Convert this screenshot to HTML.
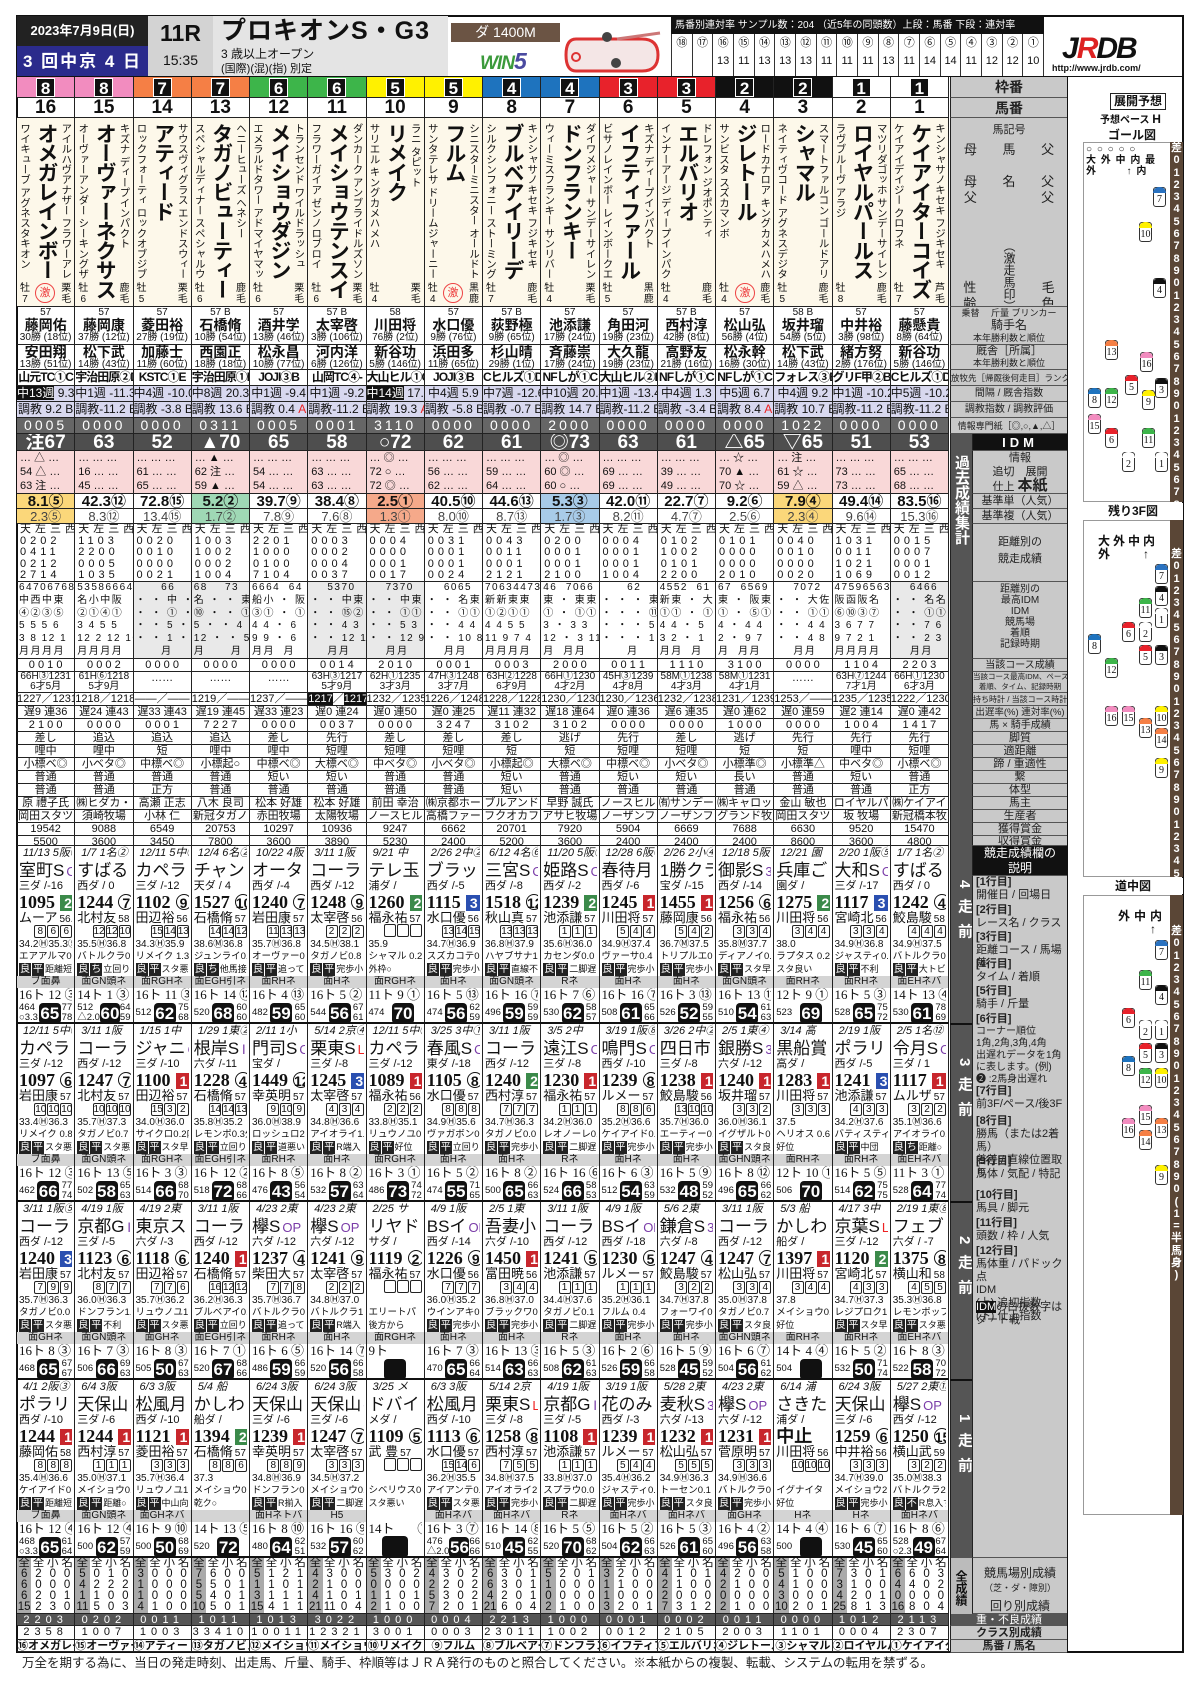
<!DOCTYPE html>
<html><head><meta charset="utf-8">
<style>
*{margin:0;padding:0;box-sizing:border-box}
body{width:1200px;height:1683px;background:#fff;position:relative;overflow:hidden;font-family:"Liberation Sans","Noto Sans CJK JP",sans-serif;color:#111}
.ab{position:absolute}
.row{position:absolute;left:17px;width:932px;display:flex;border-bottom:1px solid #222}
.row>div{flex:0 0 58.25px;width:58.25px;border-right:1px solid #222;overflow:hidden;text-align:center;white-space:nowrap}
.lab{position:absolute;left:950px;width:117px;background:#c9c9c9;border-bottom:1px solid #555;border-left:1px solid #222;text-align:center;font-size:10px;color:#222;overflow:hidden;white-space:nowrap}
.lab2{left:972px;width:95px}
.frm>div{display:flex;align-items:center;justify-content:center}
.frm span{display:inline-block;width:19px;height:19px;background:#111;color:#fff;font-weight:bold;font-size:17px;line-height:19px;border:1px solid #fff}
.num>div{font-size:19px;font-weight:bold;line-height:20px}
.nm>div{background:#fdf8ea;position:relative}
.nm .r,.nm .l,.nm .c{position:absolute;top:5px;writing-mode:vertical-rl;white-space:nowrap}
.nm .r{right:2px;font-size:10.5px;line-height:12px;letter-spacing:-0.3px}
.nm .l{left:2px;font-size:10.5px;line-height:12px;letter-spacing:-0.3px}
.nm .c{left:16px;font-size:21px;line-height:26px;font-weight:bold;letter-spacing:-1.5px}
.nm .sx{position:absolute;bottom:1px;left:3px;font-size:10px;line-height:11px;width:10px;white-space:normal}
.nm .cl{position:absolute;bottom:1px;right:3px;font-size:10px;line-height:11px;width:10px;white-space:normal}
.jk>div{font-size:10px;line-height:12px}
.jk b{display:block;font-size:14px;line-height:13px}
.tr>div{font-size:10px;line-height:11px}
.tr b{display:block;font-size:14px;line-height:14px}
.sm>div{font-size:12px;line-height:15px;font-weight:bold;letter-spacing:-1px}
.lv>div{background:#d8d8ef;font-size:12px;line-height:15px}
.inf>div{background:#666;color:#fff;font-size:14px;line-height:15px;letter-spacing:3px}
.idm>div{background:#4e4e4e;color:#fff;font-size:19px;font-weight:bold;line-height:17px}
.pk>div{background:#f9d8d8;font-size:11px;line-height:14px;text-align:left;padding-left:3px}
.t1>div{font-size:15px;font-weight:bold;line-height:15px}
.t2>div{font-size:13px;line-height:15px;color:#444}
.ds>div{font-size:11px;line-height:11.5px;letter-spacing:4px;padding-left:3px;text-align:left;white-space:pre}
.mx>div{font-size:10px;line-height:12.8px;letter-spacing:1.5px;padding-left:2px;text-align:left;white-space:pre}
.tx>div{font-size:11px;line-height:12px}
.pb{height:178px;font-size:11px;line-height:12px;text-align:left;padding:0 2px}
.pb p{white-space:nowrap;overflow:hidden}
.pb .a{height:15px;font-size:11px;line-height:15px;font-style:italic;padding-left:4px}
.pb .b{height:19px;font-size:17px;line-height:19px}
.pb .b em{font-style:normal;font-size:13px;color:#7a3ca8;margin-left:2px}
.pb .b em.r{color:#e22}
.pb .c{height:13px;font-size:11px;line-height:13px}
.pb .d{height:18px;font-size:18px;line-height:18px;font-family:"Liberation Serif",serif;font-weight:bold}
.pb .d u{text-decoration:none;display:inline-block;width:16px;height:16px;font-size:14px;line-height:16px;color:#fff;text-align:center;margin-left:5px;font-family:"Liberation Sans",sans-serif}
.g1{background:#c8262c}.g2{background:#3b8a4a}.g3{background:#2a4fb0}.g0{background:#fff;color:#111!important;border:1px solid #111;border-radius:50%}
.pb .e{height:13px;font-size:13px;line-height:13px}
.pb .e small{font-size:10px;margin-left:2px}
.pb .f{height:15px;line-height:15px;text-align:right;font-size:10px}
.pb .f span{display:inline-block;width:12px;height:13px;border:1px solid #222;border-radius:2px;line-height:11px;text-align:center;margin-left:1px}
.pb .h{height:12px;font-size:10px}
.pb .i{height:12px;font-size:9.5px}
.pb .j{height:13px;font-size:9px;line-height:13px}
.pb .j s{text-decoration:none;display:inline-block;background:#222;color:#fff;width:12px;text-align:center;margin-right:1px;font-size:10px}
.pb .k{height:12px;background:#d4d4d4;text-align:center;font-size:10px;margin:0 -2px}
.pb .m{height:14px;font-size:13px;line-height:14px;font-family:"Liberation Serif",serif}
.pb .n{height:22px;display:flex;justify-content:space-between;align-items:center;font-size:9.5px;line-height:10px}
.pb .n b{display:inline-block;background:#111;color:#fff;width:22px;height:21px;border-radius:4px;font-size:17px;line-height:21px;text-align:center}
.bs>div{font-size:11.5px;line-height:11px;display:flex;text-align:center;letter-spacing:0}
.bs>div>span{flex:1;white-space:pre}
.bs>div>span:first-child{background:#aaa}
.hi{position:absolute;width:13px;height:20px;border:1px solid #333;border-radius:3px;background:#fff;font-size:10px;text-align:center;line-height:24px;font-family:"Liberation Serif",serif}
.hi:before{content:"";position:absolute;left:-1px;right:-1px;top:-1px;height:6px;border-radius:6px 6px 0 0;background:var(--c)}
.strip{position:absolute;left:1170px;width:13px;background:#5a4636;color:#fff;font-size:11px;line-height:12.3px;text-align:center;white-space:pre;font-weight:bold}
</style></head><body>

<div class="ab" style="left:16px;top:15px;width:1168px;height:1638px;border:2px solid #111"></div>

<div class="ab" style="left:17px;top:16px;width:131px;height:30px;background:#222;color:#fff;font-size:13px;font-weight:bold;line-height:30px;text-align:center">2023年7月9日(日)</div>
<div class="ab" style="left:17px;top:46px;width:131px;height:31px;background:#2b2b8c;color:#fff;font-size:17px;font-weight:bold;line-height:31px;text-align:center;letter-spacing:2px">3 回中京 4 日</div>
<div class="ab" style="left:148px;top:16px;width:65px;height:61px;background:#d3d3d3;text-align:center"><div style="font-size:23px;font-weight:bold;line-height:34px">11R</div><div style="font-size:14px;line-height:20px">15:35</div></div>
<div class="ab" style="left:213px;top:16px;width:235px;height:61px;background:#e4e4e4;padding-left:8px"><div style="font-size:25px;font-weight:bold;line-height:30px;letter-spacing:1px">プロキオンS・G3</div><div style="font-size:12px;line-height:16px">3 歳以上オープン</div><div style="font-size:11px;line-height:14px">(国際)(混)(指) 別定</div></div>
<div class="ab" style="left:451px;top:23px;width:109px;height:19px;background:#6b5444;color:#fff;font-size:14px;line-height:19px;text-align:center">ダ 1400M</div>
<div class="ab" style="left:480px;top:48px;font-size:19px;font-weight:bold;font-style:italic;color:#3b9a3b;letter-spacing:-1px">WIN<span style="color:#4a4aa0;font-size:23px">5</span></div>
<svg class="ab" style="left:562px;top:25px" width="108" height="52"><path d="M14 14 H80 Q96 14 96 30 Q96 46 80 46 H14 Q4 46 4 30 Q4 14 14 14Z" fill="#f4e6e6" stroke="#d33" stroke-width="3"/><circle cx="14" cy="32" r="4" fill="none" stroke="#d33" stroke-width="2"/><path d="M55 14 L98 8" stroke="#c77" stroke-width="3"/><circle cx="45" cy="12" r="5" fill="#444"/><circle cx="54" cy="38" r="5" fill="#444"/></svg>
<div class="ab" style="left:671px;top:17px;width:373px;height:17px;background:#111;color:#fff;font-size:10px;line-height:17px;padding-left:4px;white-space:nowrap">馬番別連対率 サンプル数：204 （近5年の同頭数）上段：馬番 下段：連対率</div>
<div class="ab" style="left:671px;top:34px;width:373px;height:43px;display:flex;font-size:11px">
<div style="flex:1;border-left:1px solid #333;text-align:center;line-height:18px">⑱</div><div style="flex:1;border-left:1px solid #333;text-align:center;line-height:18px">⑰</div><div style="flex:1;border-left:1px solid #333;text-align:center;line-height:18px">⑯<br>13</div><div style="flex:1;border-left:1px solid #333;text-align:center;line-height:18px">⑮<br>11</div><div style="flex:1;border-left:1px solid #333;text-align:center;line-height:18px">⑭<br>13</div><div style="flex:1;border-left:1px solid #333;text-align:center;line-height:18px">⑬<br>13</div><div style="flex:1;border-left:1px solid #333;text-align:center;line-height:18px">⑫<br>13</div><div style="flex:1;border-left:1px solid #333;text-align:center;line-height:18px">⑪<br>11</div><div style="flex:1;border-left:1px solid #333;text-align:center;line-height:18px">⑩<br>11</div><div style="flex:1;border-left:1px solid #333;text-align:center;line-height:18px">⑨<br>11</div><div style="flex:1;border-left:1px solid #333;text-align:center;line-height:18px">⑧<br>13</div><div style="flex:1;border-left:1px solid #333;text-align:center;line-height:18px">⑦<br>11</div><div style="flex:1;border-left:1px solid #333;text-align:center;line-height:18px">⑥<br>14</div><div style="flex:1;border-left:1px solid #333;text-align:center;line-height:18px">⑤<br>14</div><div style="flex:1;border-left:1px solid #333;text-align:center;line-height:18px">④<br>11</div><div style="flex:1;border-left:1px solid #333;text-align:center;line-height:18px">③<br>12</div><div style="flex:1;border-left:1px solid #333;text-align:center;line-height:18px">②<br>12</div><div style="flex:1;border-left:1px solid #333;border-right:1px solid #333;text-align:center;line-height:18px">①<br>10</div></div>
<div class="ab" style="left:1062px;top:32px;font-size:30px;font-weight:900;font-style:italic;letter-spacing:-2px;color:#111">J<span style="color:#d22">R</span>DB</div>
<div class="ab" style="left:1052px;top:63px;font-size:9px;font-weight:bold">http://www.jrdb.com/</div>
<div class="ab" style="left:17px;top:76px;width:1167px;height:1px;background:#111"></div>

<div class="row frm" style="top:77px;height:21px">
<div style="background:#f28cbf"><span>8</span></div><div style="background:#f28cbf"><span>8</span></div><div style="background:#f57f45"><span>7</span></div><div style="background:#f57f45"><span>7</span></div><div style="background:#3db54a"><span>6</span></div><div style="background:#3db54a"><span>6</span></div><div style="background:#fff100"><span>5</span></div><div style="background:#fff100"><span>5</span></div><div style="background:#1e73be"><span>4</span></div><div style="background:#1e73be"><span>4</span></div><div style="background:#e8222b"><span>3</span></div><div style="background:#e8222b"><span>3</span></div><div style="background:#111"><span>2</span></div><div style="background:#111"><span>2</span></div><div style="background:#fff"><span>1</span></div><div style="background:#fff"><span>1</span></div></div>
<div class="row num" style="top:98px;height:20px"><div>16</div><div>15</div><div>14</div><div>13</div><div>12</div><div>11</div><div>10</div><div>9</div><div>8</div><div>7</div><div>6</div><div>5</div><div>4</div><div>3</div><div>2</div><div>1</div></div>

<div class="row nm" style="top:118px;height:189px">
<div><span class="r">アイルハヴアナザー フラワーアレ</span><span class="c">オメガレインボー</span><span class="l">ワイキューブ アグネスタキオン</span><span class="sx">牡7</span><span class="cl">栗毛</span></div>
<div><span class="r">キズナ ディープインパクト</span><span class="c">オーヴァーネクサス</span><span class="l">オーヴァーアンダー シーキングザ</span><span class="sx">牡6</span><span class="cl">鹿毛</span></div>
<div><span class="r">サウスヴィグラス エンドスウィー</span><span class="c">アティード</span><span class="l">ロックフォーティ ロックオブジブ</span><span class="sx">牡5</span><span class="cl">栗毛</span></div>
<div><span class="r">ヘニーヒューズ ヘネシー</span><span class="c">タガノビューティー</span><span class="l">スペシャルディナー スペシャルウ</span><span class="sx">牡6</span><span class="cl">鹿毛</span></div>
<div><span class="r">トランセンド ワイルドラッシュ</span><span class="c">メイショウダジン</span><span class="l">エメラルドタワー アドマイヤマッ</span><span class="sx">牡6</span><span class="cl">栗毛</span></div>
<div><span class="r">ダンカーク アンブライドルズソン</span><span class="c">メイショウテンスイ</span><span class="l">フラワーガイア ゼンノロブロイ</span><span class="sx">牡6</span><span class="cl">栗毛</span></div>
<div><span class="r">ラニ タピット</span><span class="c">リメイク</span><span class="l">サリエル キングカメハメハ</span><span class="sx">牡4</span><span class="cl">栗毛</span></div>
<div><span class="r">シニスターミニスター オールドト</span><span class="c">フルム</span><span class="l">サンタテレサ ドリームジャーニー</span><span class="sx">牡4</span><span class="cl">黒鹿</span></div>
<div><span class="r">キンシャサノキセキ フジキセキ</span><span class="c">ブルベアイリーデ</span><span class="l">シルクシンフォニー ストーミング</span><span class="sx">牡7</span><span class="cl">鹿毛</span></div>
<div><span class="r">ダイワメジャー サンデーサイレン</span><span class="c">ドンフランキー</span><span class="l">ウィーミスフランキー サンリバー</span><span class="sx">牡4</span><span class="cl">栗毛</span></div>
<div><span class="r">キズナ ディープインパクト</span><span class="c">イフティファール</span><span class="l">ビサノレインボー レインボークエ</span><span class="sx">牡5</span><span class="cl">黒鹿</span></div>
<div><span class="r">ドレフォン ジオポンティ</span><span class="c">エルバリオ</span><span class="l">インナーアージ ディープインパク</span><span class="sx">牡4</span><span class="cl">鹿毛</span></div>
<div><span class="r">ロードカナロア キングカメハメハ</span><span class="c">ジレトール</span><span class="l">サンビスタ スズカマンボ</span><span class="sx">牡4</span><span class="cl">鹿毛</span></div>
<div><span class="r">スマートファルコン ゴールドアリ</span><span class="c">シャマル</span><span class="l">ネイティヴコード アグネスデジタ</span><span class="sx">牡5</span><span class="cl">鹿毛</span></div>
<div><span class="r">マツリダゴッホ サンデーサイレン</span><span class="c">ロイヤルパールス</span><span class="l">ラヴブルーヴ アラジ</span><span class="sx">牡8</span><span class="cl">鹿毛</span></div>
<div><span class="r">キンシャサノキセキ フジキセキ</span><span class="c">ケイアイターコイズ</span><span class="l">ケイアイデイジー クロフネ</span><span class="sx">牡7</span><span class="cl">芦毛</span></div>
</div>
<div class="ab" style="left:35px;top:283px;width:20px;height:20px;border:1px solid #e44;border-radius:50%;color:#e44;font-size:11px;line-height:18px;text-align:center;background:#fdf8ea">激</div>
<div class="ab" style="left:443px;top:283px;width:20px;height:20px;border:1px solid #e44;border-radius:50%;color:#e44;font-size:11px;line-height:18px;text-align:center;background:#fdf8ea">激</div>
<div class="ab" style="left:735px;top:283px;width:20px;height:20px;border:1px solid #e44;border-radius:50%;color:#e44;font-size:11px;line-height:18px;text-align:center;background:#fdf8ea">激</div>

<div class="row jk" style="top:307px;height:38px">
<div>57<b>藤岡佑</b>30勝 (18位)</div><div>57<b>藤岡康</b>37勝 (12位)</div><div>57<b>菱田裕</b>27勝 (19位)</div><div>57 B<b>石橋脩</b>10勝 (54位)</div><div>57<b>酒井学</b>13勝 (46位)</div><div>57 B<b>太宰啓</b>3勝 (106位)</div><div>58<b>川田将</b>76勝 (2位)</div><div>57<b>水口優</b>9勝 (76位)</div><div>57 B<b>荻野極</b>9勝 (65位)</div><div>57<b>池添謙</b>17勝 (24位)</div><div>57<b>角田河</b>19勝 (23位)</div><div>57 B<b>西村淳</b>42勝 (8位)</div><div>57<b>松山弘</b>56勝 (4位)</div><div>58 B<b>坂井瑠</b>54勝 (5位)</div><div>57<b>中井裕</b>3勝 (98位)</div><div>57<b>藤懸貴</b>8勝 (64位)</div></div>
<div class="row tr" style="top:345px;height:25px">
<div><b>安田翔</b>13勝 (51位)</div><div><b>松下武</b>14勝 (43位)</div><div><b>加藤士</b>11勝 (60位)</div><div><b>西園正</b>18勝 (18位)</div><div><b>松永昌</b>10勝 (77位)</div><div><b>河内洋</b>6勝 (126位)</div><div><b>新谷功</b>5勝 (146位)</div><div><b>浜田多</b>11勝 (65位)</div><div><b>杉山晴</b>29勝 (1位)</div><div><b>斉藤崇</b>17勝 (24位)</div><div><b>大久龍</b>19勝 (23位)</div><div><b>高野友</b>21勝 (16位)</div><div><b>松永幹</b>16勝 (30位)</div><div><b>松下武</b>14勝 (43位)</div><div><b>緒方努</b>2勝 (176位)</div><div><b>新谷功</b>5勝 (146位)</div></div>
<div class="row sm" style="top:370px;height:16px"><div>山元TC①C</div><div>宇治田原②D</div><div>KSTC①E</div><div>宇治田原①D</div><div>JOJI③B</div><div>山岡TC④-</div><div>大山ヒル①C</div><div>JOJI③B</div><div>Cヒルズ①D</div><div>NFしが①C</div><div>大山ヒル②B</div><div>NFしが①C</div><div>NFしが①C</div><div>フォレス③B</div><div>グリF甲②B</div><div>Cヒルズ①D</div></div>
<div class="row lv" style="top:386px;height:16px"><div><span style="background:#111;color:#fff">中13週</span> 9.3</div><div>中1週 -11.3</div><div>中4週 -10.0</div><div>中8週 20.3</div><div>中1週 -9.4</div><div>中1週 -9.2</div><div><span style="background:#111;color:#fff">中14週</span> 17.2</div><div>中4週 5.9</div><div>中7週 -12.6</div><div>中10週 20.4</div><div>中1週 -13.4</div><div>中4週 1.3</div><div>中5週 6.7</div><div>中4週 9.2</div><div>中1週 -10.2</div><div>中5週 -10.2</div></div>
<div class="row lv" style="top:402px;height:16px"><div>調教 9.2 B</div><div>調教-11.2 B</div><div>調教 -3.8 B</div><div>調教 13.6 B</div><div>調教 0.4 <span style="color:#e22">A</span></div><div>調教-11.2 B</div><div>調教 19.3 <span style="color:#e22">AA</span></div><div>調教 -5.8 B</div><div>調教 -0.7 B</div><div>調教 14.7 B</div><div>調教-11.2 B</div><div>調教 -3.4 B</div><div>調教 8.4 <span style="color:#e22">A</span></div><div>調教 10.7 B</div><div>調教-11.2 B</div><div>調教-11.2 B</div></div>
<div class="row inf" style="top:418px;height:16px"><div>0005</div><div>0000</div><div>0000</div><div>0311</div><div>0005</div><div>0001</div><div>3110</div><div>0000</div><div>0000</div><div>2000</div><div>0000</div><div>0000</div><div>0000</div><div>1022</div><div>0000</div><div>0000</div></div>
<div class="row idm" style="top:434px;height:17px"><div>注67</div><div>63</div><div>52</div><div>▲70</div><div>65</div><div>58</div><div>○72</div><div>62</div><div>61</div><div>◎73</div><div>63</div><div>61</div><div>△65</div><div>▽65</div><div>51</div><div>53</div></div>
<div class="row pk" style="top:451px;height:43px">
<div>… △ …<br>54 △ …<br>63 注 …</div><div>… … …<br>16 … …<br>45 … …</div><div>… … …<br>61 … …<br>65 … …</div><div>… ▲ …<br>62 注 …<br>59 ▲ …</div><div>… … …<br>54 … …<br>54 … …</div><div>… … …<br>63 … …<br>63 … …</div><div>… ◎ …<br>72 ○ …<br>72 ◎ …</div><div>… … …<br>56 … …<br>62 … …</div><div>… … …<br>59 … …<br>64 … …</div><div>… ◎ …<br>60 ◎ …<br>60 ○ …</div><div>… … …<br>69 … …<br>69 … …</div><div>… … …<br>39 … …<br>49 … …</div><div>… ☆ …<br>70 ▲ …<br>70 ☆ …</div><div>… 注 …<br>61 ☆ …<br>59 △ …</div><div>… … …<br>73 … …<br>73 … …</div><div>… … …<br>65 … …<br>68 … …</div></div>
<div class="row t1" style="top:494px;height:15px"><div style="background:#fbd77a">8.1⑤</div><div>42.3⑫</div><div>72.8⑮</div><div style="background:#9fd8b5">5.2②</div><div>39.7⑨</div><div>38.4⑧</div><div style="background:#f5a98a">2.5①</div><div>40.5⑩</div><div>44.6⑬</div><div style="background:#a8cbe8">5.3③</div><div>42.0⑪</div><div>22.7⑦</div><div>9.2⑥</div><div style="background:#fbd77a">7.9④</div><div>49.4⑭</div><div>83.5⑯</div></div>
<div class="row t2" style="top:509px;height:15px"><div style="background:#fbd77a">2.3⑤</div><div>8.3⑫</div><div>13.4⑮</div><div style="background:#9fd8b5">1.7②</div><div>7.8⑨</div><div>7.6⑧</div><div style="background:#f5a98a">1.3①</div><div>8.0⑩</div><div>8.7⑬</div><div style="background:#a8cbe8">1.7③</div><div>8.2⑪</div><div>4.7⑦</div><div>2.5⑥</div><div style="background:#fbd77a">2.3④</div><div>9.6⑭</div><div>15.3⑯</div></div>
<div class="row ds" style="top:524px;height:58px">
<div>天左三西
0202
0411
0212
2714</div><div>天左三西
1103
2200
0005
1035</div><div>天左三西
0020
0010
0000
0021</div><div>天左三西
1003
1002
0002
1004</div><div>天左三西
2201
1000
0100
7104</div><div>天左三西
0003
0002
0004
0037</div><div>天左三西
0004
0000
0001
0017</div><div>天左三西
0031
0001
0001
0024</div><div>天左三西
0043
0011
0001
2121</div><div>天左三西
0200
0001
0001
2100</div><div>天左三西
0004
0001
0001
1004</div><div>天左三西
0102
1002
0101
2200</div><div>天左三西
0101
0000
0000
2010</div><div>天左三西
0040
0010
0000
0020</div><div>天左三西
1031
0011
1021
1069</div><div>天左三西
0015
0007
0001
0012</div></div>
<div class="row mx" style="top:582px;height:77px">
<div>64706768
中西中東
④②③⑤
5 5 5 6
3 8 12 1
月月月月</div><div>53586664
名小中阪
②①④①
3 4 5 5
12 2 12 10
月月月月</div><div style="background:#e9e9e9">      66
・ ・ 中 ・
・ ・ ① ・
・ ・ 5 ・
・ ・ 1 ・
      月</div><div style="background:#e9e9e9">68    73
名 ・ ・ 東
⑩ ・ ・ ①
5 ・ ・ 4
12 ・ ・ 5
月      月</div><div>6664  64
船小 ・ 阪
③① ・ ①
4 4 ・ 6
9 9 ・ 6
月月  月</div><div style="background:#e9e9e9">    5370
・ ・ 中東
・ ・ ⑮②
・ ・ 4 3
・ ・ 12 11
    月月</div><div style="background:#e9e9e9">    7370
・ ・ 中東
・ ・ ①①
・ ・ 5 3
・ ・ 12 9
    月月</div><div>    6065
・ ・ 名東
・ ・ ①①
・ ・ 4 4
・ ・ 10 8
    月月</div><div>70634473
新新東東
①②①①
4 4 5 5
11 9 7 4
月月月月</div><div>46  7066
東 ・ 東東
① ・ ①①
3 ・ 3 3
12 ・ 3 11
月  月月</div><div>      62
・ ・ ・ 東
・ ・ ・ ⑪
・ ・ ・ 5
・ ・ ・ 1
      月</div><div>4552  61
新東 ・ 大
①① ・ ①
4 4 ・ 5
3 2 ・ 1
月月  月</div><div>67  6569
東 ・ 阪東
① ・ ⑤①
4 ・ 4 4
2 ・ 9 7
月  月月</div><div>    7072
・ ・ 大佐
・ ・ ①①
・ ・ 4 4
・ ・ 4 8
    月月</div><div>47596563
阪函阪名
⑥⑩③⑦
3 6 7 7
9 7 2 1
月月月月</div><div style="background:#e9e9e9">    6466
・ ・ 名名
・ ・ ①①
・ ・ 7 6
・ ・ 2 3
    月月</div></div>
<div class="row tx" style="top:659px;height:13px"><div>0 0 1 0</div><div>0 0 0 2</div><div>0 0 0 0</div><div>0 0 0 0</div><div>0 0 0 0</div><div>0 0 1 4</div><div>2 0 1 0</div><div>0 0 0 1</div><div>0 0 0 3</div><div>2 0 0 0</div><div>0 0 1 1</div><div>1 1 1 0</div><div>3 1 0 0</div><div>0 0 0 0</div><div>1 1 0 4</div><div>2 2 0 3</div></div>
<div class="row tx" style="top:672px;height:21px;font-size:10px"><div style="font-size:10px;line-height:10px">66H③1231<br>6才5月</div><div style="font-size:10px;line-height:10px">61H⑥1218<br>5才9月</div><div>……</div><div>……</div><div>……</div><div style="font-size:10px;line-height:10px">63H③1217<br>5才9月</div><div style="font-size:10px;line-height:10px">62H①1235<br>3才3月</div><div style="font-size:10px;line-height:10px">47H③1248<br>3才7月</div><div style="font-size:10px;line-height:10px">63H②1228<br>6才9月</div><div style="font-size:10px;line-height:10px">66H①1230<br>4才2月</div><div style="font-size:10px;line-height:10px">45H③1239<br>4才8月</div><div style="font-size:10px;line-height:10px">58M①1238<br>4才3月</div><div style="font-size:10px;line-height:10px">58M①1231<br>4才1月</div><div>……</div><div style="font-size:10px;line-height:10px">63H⑦1244<br>7才1月</div><div style="font-size:10px;line-height:10px">66H①1230<br>6才3月</div></div>
<div class="row tx" style="top:693px;height:13px;font-size:10px"><div>1227／1231</div><div>1218／1218</div><div>――／――</div><div>1219／――</div><div>1237／――</div><div><span style="background:#111;color:#fff">1217</span>／<span style="background:#111;color:#fff">1217</span></div><div>1232／1235</div><div>1226／1248</div><div>1228／1228</div><div>1230／1230</div><div>1230／1236</div><div>1232／1238</div><div>1231／1239</div><div>1253／――</div><div>1235／1235</div><div>1222／1230</div></div>
<div class="row tx" style="top:706px;height:13px"><div>遅9 連36</div><div>遅24 連43</div><div>遅33 連43</div><div>遅19 連45</div><div>遅33 連23</div><div>遅0 連24</div><div>遅0 連50</div><div>遅0 連25</div><div>遅11 連32</div><div>遅18 連64</div><div>遅0 連36</div><div>遅6 連35</div><div>遅0 連62</div><div>遅0 連59</div><div>遅2 連14</div><div>遅0 連42</div></div>
<div class="row tx" style="top:719px;height:13px"><div>2 1 0 0</div><div>0 0 0 0</div><div>0 0 0 1</div><div>7 2 2 7</div><div>0 0 0 0</div><div>0 0 3 7</div><div>0 0 0 0</div><div>3 2 4 7</div><div>3 1 0 2</div><div>3 1 0 2</div><div>0 0 0 0</div><div>0 0 0 0</div><div>1 0 0 0</div><div>0 0 0 0</div><div>1 0 0 4</div><div>1 4 1 7</div></div>
<div class="row tx" style="top:732px;height:13px"><div>差し</div><div>追込</div><div>追込</div><div>追込</div><div>差し</div><div>先行</div><div>差し</div><div>差し</div><div>差し</div><div>逃げ</div><div>先行</div><div>差し</div><div>逃げ</div><div>先行</div><div>先行</div><div>先行</div></div>
<div class="row tx" style="top:745px;height:13px"><div>哩中</div><div>哩中</div><div>短</div><div>哩中</div><div>哩中</div><div>短哩</div><div>短哩</div><div>短哩</div><div>短</div><div>短</div><div>短哩</div><div>短哩</div><div>短</div><div>短</div><div>哩中</div><div>短哩</div></div>
<div class="row tx" style="top:758px;height:13px"><div>小標ベ◎</div><div>小ベタ◎</div><div>中標ベ◎</div><div>小標起○</div><div>中標ベ◎</div><div>大標ベ◎</div><div>中ベタ◎</div><div>小ベタ◎</div><div>小標起◎</div><div>大標ベ◎</div><div>中標ベ◎</div><div>小ベタ◎</div><div>小標準◎</div><div>小標準△</div><div>中ベタ◎</div><div>小標ベ◎</div></div>
<div class="row tx" style="top:771px;height:13px"><div>普通</div><div>普通</div><div>普通</div><div>普通</div><div>短い</div><div>短い</div><div>普通</div><div>普通</div><div>短い</div><div>普通</div><div>短い</div><div>短い</div><div>長い</div><div>普通</div><div>短い</div><div>普通</div></div>
<div class="row tx" style="top:784px;height:13px"><div>普通</div><div>普通</div><div>正方</div><div>普通</div><div>普通</div><div>普通</div><div>普通</div><div>普通</div><div>短い</div><div>普通</div><div>普通</div><div>普通</div><div>普通</div><div>普通</div><div>普通</div><div>正方</div></div>
<div class="row tx" style="top:797px;height:13px;font-size:10.5px"><div>原 禮子氏</div><div>㈱ヒダカ・</div><div>高瀬 正志</div><div>八木 良司</div><div>松本 好雄</div><div>松本 好雄</div><div>前田 幸治</div><div>㈱京都ホー</div><div>ブルアンド</div><div>早野 誠氏</div><div>ノースヒル</div><div>㈲サンデー</div><div>㈱キャロッ</div><div>金山 敏也</div><div>ロイヤルパ</div><div>㈱ケイアイ</div></div>
<div class="row tx" style="top:810px;height:13px"><div>岡田スタツ</div><div>須崎牧場</div><div>小林 仁</div><div>新冠タガノ</div><div>赤田牧場</div><div>太陽牧場</div><div>ノースヒル</div><div>高橋ファー</div><div>フクオカフ</div><div>アサヒ牧場</div><div>ノーザンフ</div><div>ノーザンフ</div><div>グランド牧</div><div>岡田スタツ</div><div>坂 牧場</div><div>新冠橋本牧</div></div>
<div class="row tx" style="top:823px;height:13px;font-size:12px"><div>19542</div><div>9088</div><div>6549</div><div>20753</div><div>10297</div><div>10936</div><div>9247</div><div>6662</div><div>20701</div><div>7920</div><div>5904</div><div>6669</div><div>7688</div><div>6630</div><div>9520</div><div>15470</div></div>
<div class="row tx" style="top:836px;height:10px;font-size:12px;line-height:10px"><div>5500</div><div>3600</div><div>3450</div><div>7800</div><div>3600</div><div>3890</div><div>5230</div><div>2400</div><div>5200</div><div>3600</div><div>2400</div><div>2400</div><div>2400</div><div>8600</div><div>3600</div><div>4800</div></div>

<div class="row" style="top:846px;height:178px;border-bottom:2px solid #111">
<div><div class="pb"><p class="a">11/13 5阪④</p><p class="b">室町S<em>OP</em></p><p class="c">三ダ /-16</p><p class="d">1095<u class="g2">2</u></p><p class="e">ムーア<small>56.5</small></p><p class="f"><span>8</span><span>6</span><span>6</span></p><p class="h">34.2Ⓗ35.3⑤</p><p class="i">エアアルマ0.4外</p><p class="j"><s>良</s><s>平</s>距離短</p><p class="k">ブ面鼻</p><p class="m">16ト 12 ③</p><div class="n"><span>464<br>○3.3</span><b>65</b><span>77<br>78</span></div></div></div>
<div><div class="pb"><p class="a">1/7 1名②</p><p class="b">すばる<em class="r">L</em></p><p class="c">西ダ / 0</p><p class="d">1244<u class="g0">7</u></p><p class="e">北村友<small>58</small></p><p class="f"><span>12</span><span>12</span><span>10</span></p><p class="h">35.5Ⓗ36.8</p><p class="i">バトルクラ0.6</p><p class="j"><s>良</s><s>ち</s>立回り○</p><p class="k">面GN頭ネ</p><p class="m">14ト 1 ③</p><div class="n"><span>512<br>△2.0</span><b>60</b><span>64<br>59</span></div></div></div>
<div><div class="pb"><p class="a">12/11 5中④</p><p class="b">カペラ<em>Ⅲ</em></p><p class="c">三ダ /-12</p><p class="d">1102<u class="g0">9</u></p><p class="e">田辺裕<small>56</small></p><p class="f"><span>15</span><span>14</span><span>13</span></p><p class="h">34.3Ⓗ35.9</p><p class="i">リメイク 1.3</p><p class="j"><s>良</s><s>平</s>スタ悪い</p><p class="k">面RGHネ</p><p class="m">16ト 11 ③</p><div class="n"><span>512</span><b>62</b><span>75<br>68</span></div></div></div>
<div><div class="pb"><p class="a">12/4 6名②</p><p class="b">チャン<em class="r">Ⅰ</em></p><p class="c">天ダ / 4</p><p class="d">1527<u class="g0">10</u></p><p class="e">石橋脩<small>57</small></p><p class="f"><span>14</span><span>14</span><span>12</span></p><p class="h">38.6Ⓜ36.8</p><p class="i">ジュンライ0.8</p><p class="j"><s>良</s><s>ち</s>他馬接触</p><p class="k">面EGH引ネ</p><p class="m">16ト 14 ⑫</p><div class="n"><span>520</span><b>68</b><span>60<br>60</span></div></div></div>
<div><div class="pb"><p class="a">10/22 4阪⑥</p><p class="b">オータ<em>OP</em></p><p class="c">西ダ /-4</p><p class="d">1240<u class="g0">7</u></p><p class="e">岩田康<small>57</small></p><p class="f"><span>11</span><span>13</span><span>13</span></p><p class="h">35.7Ⓗ36.8</p><p class="i">オーヴァー0.4</p><p class="j"><s>良</s><s>平</s>追って</p><p class="k">面RHネ</p><p class="m">16ト 4 ⑬</p><div class="n"><span>482</span><b>59</b><span>65<br>60</span></div></div></div>
<div><div class="pb"><p class="a">3/11 1阪</p><p class="b">コーラ<em class="r">L</em></p><p class="c">西ダ /-12</p><p class="d">1248<u class="g0">9</u></p><p class="e">太宰啓<small>56</small></p><p class="f"><span>2</span><span>2</span><span>2</span></p><p class="h">34.5Ⓗ38.1</p><p class="i">タガノビ0.8</p><p class="j"><s>良</s><s>平</s>完歩小</p><p class="k">面Hネ</p><p class="m">16ト 5 ②</p><div class="n"><span>544</span><b>56</b><span>67<br>61</span></div></div></div>
<div><div class="pb"><p class="a">9/21 中</p><p class="b">テレ玉<em>Ⅲ</em></p><p class="c">浦ダ /</p><p class="d">1260<u class="g2">2</u></p><p class="e">福永祐<small>57</small></p><p class="f"><span></span><span></span><span></span></p><p class="h">35.9</p><p class="i">シャマル 0.2</p><p class="j">外枠○</p><p class="k">面RGHネ</p><p class="m">11ト 9 ①</p><div class="n"><span>474</span><b>70</b><span></span></div></div></div>
<div><div class="pb"><p class="a">2/26 2中②</p><p class="b">ブラッ<em>OP</em></p><p class="c">西ダ /-5</p><p class="d">1115<u class="g3">3</u></p><p class="e">水口優<small>56</small></p><p class="f"><span>13</span><span>14</span><span>15</span></p><p class="h">34.7Ⓗ36.9</p><p class="i">スズカコテ0.5</p><p class="j"><s>良</s><s>平</s>完歩小</p><p class="k">面Hネ</p><p class="m">16ト 5 ⑬</p><div class="n"><span>474</span><b>56</b><span>62<br>59</span></div></div></div>
<div><div class="pb"><p class="a">6/12 4名⑥</p><p class="b">三宮S<em>OP</em></p><p class="c">西ダ /-8</p><p class="d">1518<u class="g0">12</u></p><p class="e">秋山真<small>57</small></p><p class="f"><span>13</span><span>13</span><span>13</span></p><p class="h">36.8Ⓗ37.9</p><p class="i">ハヤブサナ1.8</p><p class="j"><s>良</s><s>平</s>直線不利</p><p class="k">面GN頭ネ</p><p class="m">16ト 16 ⑦</p><div class="n"><span>496</span><b>59</b><span>59<br>59</span></div></div></div>
<div><div class="pb"><p class="a">11/20 5阪⑥</p><p class="b">姫路S<em>OP</em></p><p class="c">西ダ /-2</p><p class="d">1239<u class="g2">2</u></p><p class="e">池添謙<small>57</small></p><p class="f"><span>1</span><span>1</span><span>1</span></p><p class="h">35.6Ⓗ36.0</p><p class="i">カセンダ0.0</p><p class="j"><s>良</s><s>平</s>二脚遅い</p><p class="k">Rネ</p><p class="m">16ト 7 ⑥</p><div class="n"><span>530</span><b>62</b><span>58<br>57</span></div></div></div>
<div><div class="pb"><p class="a">12/28 6阪⑨</p><p class="b">春待月<em>OP</em></p><p class="c">西ダ /-6</p><p class="d">1245<u class="g1">1</u></p><p class="e">川田将<small>57</small></p><p class="f"><span>5</span><span>4</span><span>4</span></p><p class="h">34.9Ⓗ37.4</p><p class="i">ヴァーサ0.4</p><p class="j"><s>良</s><s>平</s>完歩小</p><p class="k">面Hネ</p><p class="m">16ト 16 ⑦</p><div class="n"><span>508</span><b>61</b><span>65<br>66</span></div></div></div>
<div><div class="pb"><p class="a">2/26 2小④</p><p class="b">1勝クラ</p><p class="c">宝ダ /-15</p><p class="d">1455<u class="g1">1</u></p><p class="e">藤岡康<small>56</small></p><p class="f"><span>5</span><span>4</span><span>2</span></p><p class="h">36.7Ⓜ37.5</p><p class="i">トリプルエ0.1</p><p class="j"><s>良</s><s>平</s>完歩小</p><p class="k">面Hネ</p><p class="m">16ト 3 ⑬</p><div class="n"><span>526</span><b>52</b><span>59<br>55</span></div></div></div>
<div><div class="pb"><p class="a">12/18 5阪⑥</p><p class="b">御影S<em>3勝</em></p><p class="c">西ダ /-14</p><p class="d">1256<u class="g0">6</u></p><p class="e">福永祐<small>56</small></p><p class="f"><span>3</span><span>3</span><span>4</span></p><p class="h">35.8Ⓜ37.7</p><p class="i">ディアノイ0.7</p><p class="j"><s>良</s><s>平</s>スタ早い</p><p class="k">面GN頭ネ</p><p class="m">16ト 13 ⑪</p><div class="n"><span>510</span><b>54</b><span>61<br>63</span></div></div></div>
<div><div class="pb"><p class="a">12/21 園</p><p class="b">兵庫ご<em>Ⅲ</em></p><p class="c">園ダ /</p><p class="d">1275<u class="g2">2</u></p><p class="e">川田将<small>56</small></p><p class="f"><span>3</span><span>4</span><span>4</span></p><p class="h">38.0</p><p class="i">ラプタス 0.2</p><p class="j">スタ良い</p><p class="k">面RHネ</p><p class="m">12ト 9 ①</p><div class="n"><span>523</span><b>69</b><span></span></div></div></div>
<div><div class="pb"><p class="a">2/20 1阪⑤</p><p class="b">大和S<em>OP</em></p><p class="c">三ダ /-17</p><p class="d">1117<u class="g3">3</u></p><p class="e">宮崎北<small>56</small></p><p class="f"><span>3</span><span>3</span><span>4</span></p><p class="h">34.9Ⓗ36.8</p><p class="i">ジャスティ0.1</p><p class="j"><s>良</s><s>平</s>不利</p><p class="k">面RHネ</p><p class="m">16ト 5 ③</p><div class="n"><span>528</span><b>65</b><span>75<br>72</span></div></div></div>
<div><div class="pb"><p class="a">1/7 1名②</p><p class="b">すばる<em class="r">L</em></p><p class="c">西ダ / 0</p><p class="d">1242<u class="g0">4</u></p><p class="e">鮫島駿<small>58</small></p><p class="f"><span>4</span><span>4</span><span>4</span></p><p class="h">34.9Ⓗ37.5</p><p class="i">バトルクラ0.4外</p><p class="j"><s>良</s><s>平</s>大トビ</p><p class="k">面EHネバ</p><p class="m">14ト 13 ④</p><div class="n"><span>530</span><b>61</b><span>78<br>69</span></div></div></div>
</div>

<div class="row" style="top:1024px;height:178px;border-bottom:2px solid #111">
<div><div class="pb"><p class="a">12/11 5中④</p><p class="b">カペラ<em>Ⅲ</em></p><p class="c">三ダ /-12</p><p class="d">1097<u class="g0">6</u></p><p class="e">岩田康<small>57</small></p><p class="f"><span>10</span><span>10</span><span>10</span></p><p class="h">33.4Ⓗ36.3</p><p class="i">リメイク 0.8外</p><p class="j"><s>良</s><s>平</s>スタ悪い</p><p class="k">ブ面鼻</p><p class="m">16ト 12 ③</p><div class="n"><span>462</span><b>66</b><span>77<br>74</span></div></div></div>
<div><div class="pb"><p class="a">3/11 1阪</p><p class="b">コーラ<em class="r">L</em></p><p class="c">西ダ /-12</p><p class="d">1247<u class="g0">7</u></p><p class="e">北村友<small>57</small></p><p class="f"><span>10</span><span>10</span><span>10</span></p><p class="h">35.7Ⓗ37.3</p><p class="i">タガノビ0.7</p><p class="j"><s>良</s><s>平</s>スタ悪い</p><p class="k">面GN頭ネ</p><p class="m">16ト 13 ⑤</p><div class="n"><span>502</span><b>58</b><span>65<br>63</span></div></div></div>
<div><div class="pb"><p class="a">1/15 1中</p><p class="b">ジャニ<em>OP</em></p><p class="c">三ダ /-10</p><p class="d">1100<u class="g1">1</u></p><p class="e">田辺裕<small>57</small></p><p class="f"><span>15</span><span>3</span><span>2</span></p><p class="h">34.0Ⓗ36.0</p><p class="i">サイクロ0.2内</p><p class="j"><s>良</s><s>平</s>スタ早い</p><p class="k">面RGHネ</p><p class="m">16ト 3 ③</p><div class="n"><span>514</span><b>66</b><span>68<br>70</span></div></div></div>
<div><div class="pb"><p class="a">1/29 1東②</p><p class="b">根岸S<em>Ⅲ</em></p><p class="c">六ダ /-11</p><p class="d">1228<u class="g0">4</u></p><p class="e">石橋脩<small>57</small></p><p class="f"><span>14</span><span>14</span><span>13</span></p><p class="h">35.8Ⓗ35.2</p><p class="i">レモンポ0.3外</p><p class="j"><s>良</s><s>平</s>立回り</p><p class="k">面EGH引ネ</p><p class="m">16ト 12 ②</p><div class="n"><span>518</span><b>72</b><span>68<br>66</span></div></div></div>
<div><div class="pb"><p class="a">2/11 1小</p><p class="b">門司S<em>OP</em></p><p class="c">宝ダ /</p><p class="d">1449<u class="g0">12</u></p><p class="e">幸英明<small>57</small></p><p class="f"><span>9</span><span>10</span><span>9</span></p><p class="h">36.0Ⓗ38.9</p><p class="i">ロッシュロ2.9</p><p class="j"><s>良</s><s>平</s>道悪い</p><p class="k">面RHネ</p><p class="m">16ト 8 ⑤</p><div class="n"><span>476</span><b>43</b><span>56<br>54</span></div></div></div>
<div><div class="pb"><p class="a">5/14 2京④</p><p class="b">栗東S<em class="r">L</em></p><p class="c">三ダ /-8</p><p class="d">1245<u class="g3">3</u></p><p class="e">太宰啓<small>57</small></p><p class="f"><span>4</span><span>3</span><span>4</span></p><p class="h">34.8Ⓗ36.6</p><p class="i">アイオライ1.9</p><p class="j"><s>良</s><s>平</s>R端入</p><p class="k">面Hネ</p><p class="m">16ト 8 ②</p><div class="n"><span>532</span><b>57</b><span>63<br>64</span></div></div></div>
<div><div class="pb"><p class="a">12/11 5中④</p><p class="b">カペラ<em>Ⅲ</em></p><p class="c">三ダ /-12</p><p class="d">1089<u class="g1">1</u></p><p class="e">福永祐<small>56</small></p><p class="f"><span>2</span><span>2</span><span>2</span></p><p class="h">33.8Ⓗ35.1</p><p class="i">リュウノユ0.7</p><p class="j"><s>良</s><s>平</s>好位</p><p class="k">面RGHネ</p><p class="m">16ト 3 ①</p><div class="n"><span>486</span><b>73</b><span>74<br>72</span></div></div></div>
<div><div class="pb"><p class="a">3/25 3中①</p><p class="b">春風S<em>OP</em></p><p class="c">東ダ /-18</p><p class="d">1105<u class="g0">8</u></p><p class="e">水口優<small>57</small></p><p class="f"><span>8</span><span>8</span><span>8</span></p><p class="h">34.9Ⓗ35.6</p><p class="i">ヴァガボン0.5</p><p class="j"><s>良</s><s>平</s>立回り</p><p class="k">面Hネ</p><p class="m">16ト 5 ②</p><div class="n"><span>474</span><b>55</b><span>71<br>65</span></div></div></div>
<div><div class="pb"><p class="a">3/11 1阪</p><p class="b">コーラ<em class="r">L</em></p><p class="c">西ダ /-12</p><p class="d">1240<u class="g2">2</u></p><p class="e">西村淳<small>57</small></p><p class="f"><span>7</span><span>7</span><span>7</span></p><p class="h">34.7Ⓗ36.3</p><p class="i">タガノビ0.0</p><p class="j"><s>良</s><s>平</s>完歩小</p><p class="k">面Hネ</p><p class="m">16ト 8 ②</p><div class="n"><span>500</span><b>65</b><span>66<br>63</span></div></div></div>
<div><div class="pb"><p class="a">3/5 2中</p><p class="b">遠江S<em>OP</em></p><p class="c">三ダ /-8</p><p class="d">1230<u class="g1">1</u></p><p class="e">福永祐<small>57</small></p><p class="f"><span>1</span><span>1</span><span>1</span></p><p class="h">34.2Ⓗ36.0</p><p class="i">レオノーレ0.4</p><p class="j"><s>良</s><s>平</s>二脚遅い</p><p class="k">Rネ</p><p class="m">16ト 16 ⑥</p><div class="n"><span>524</span><b>66</b><span>58<br>53</span></div></div></div>
<div><div class="pb"><p class="a">3/19 1阪⑧</p><p class="b">鳴門S<em>OP</em></p><p class="c">西ダ /-10</p><p class="d">1239<u class="g0">8</u></p><p class="e">ルメー<small>57</small></p><p class="f"><span>8</span><span>8</span><span>6</span></p><p class="h">35.2Ⓗ36.6</p><p class="i">ケイアイド0.9</p><p class="j"><s>良</s><s>平</s>完歩小</p><p class="k">面Hネ</p><p class="m">16ト 6 ③</p><div class="n"><span>512</span><b>54</b><span>63<br>59</span></div></div></div>
<div><div class="pb"><p class="a">3/26 2中②</p><p class="b">四日市<em>2勝</em></p><p class="c">三ダ /-8</p><p class="d">1238<u class="g1">1</u></p><p class="e">鮫島駿<small>56</small></p><p class="f"><span>13</span><span>10</span><span>10</span></p><p class="h">35.7Ⓗ36.0</p><p class="i">エーティー0.0</p><p class="j"><s>良</s><s>平</s>完歩小</p><p class="k">面Hネ</p><p class="m">16ト 5 ⑨</p><div class="n"><span>532</span><b>48</b><span>59<br>52</span></div></div></div>
<div><div class="pb"><p class="a">2/5 1東④</p><p class="b">銀勝S<em>3勝</em></p><p class="c">六ダ /-12</p><p class="d">1240<u class="g1">1</u></p><p class="e">坂井瑠<small>57</small></p><p class="f"><span>3</span><span>3</span><span>2</span></p><p class="h">36.0Ⓗ36.1</p><p class="i">イグザルト0.3</p><p class="j"><s>良</s><s>平</s>スタ良い</p><p class="k">面GHN頭ネ</p><p class="m">16ト 8 ⑫</p><div class="n"><span>496</span><b>65</b><span>66<br>62</span></div></div></div>
<div><div class="pb"><p class="a">3/14 高</p><p class="b">黒船賞<em>Ⅲ</em></p><p class="c">高ダ /</p><p class="d">1283<u class="g1">1</u></p><p class="e">川田将<small>57</small></p><p class="f"><span>3</span><span>3</span><span>3</span></p><p class="h">37.5</p><p class="i">ヘリオス 0.6</p><p class="j">好位</p><p class="k">面RHネ</p><p class="m">12ト 10 ①</p><div class="n"><span>506</span><b>70</b><span></span></div></div></div>
<div><div class="pb"><p class="a">2/19 1阪</p><p class="b">ポラリ<em>OP</em></p><p class="c">西ダ /-5</p><p class="d">1241<u class="g3">3</u></p><p class="e">池添謙<small>57</small></p><p class="f"><span>4</span><span>3</span><span>3</span></p><p class="h">34.2Ⓗ37.6</p><p class="i">バティスティ0.4</p><p class="j"><s>良</s><s>平</s>中団</p><p class="k">面RHネ</p><p class="m">16ト 5 ⑤</p><div class="n"><span>514</span><b>62</b><span>75<br>75</span></div></div></div>
<div><div class="pb"><p class="a">2/5 1名⑫</p><p class="b">令月S<em>OP</em></p><p class="c">三ダ / 1</p><p class="d">1117<u class="g1">1</u></p><p class="e">ムルザ<small>57</small></p><p class="f"><span>3</span><span>2</span><span>2</span></p><p class="h">35.1Ⓜ36.6</p><p class="i">アイオライ0.1内</p><p class="j"><s>良</s><s>ち</s>距離○</p><p class="k">面EHネバ</p><p class="m">11ト 3 ①</p><div class="n"><span>528</span><b>64</b><span>77<br>74</span></div></div></div>
</div>

<div class="row" style="top:1202px;height:178px;border-bottom:2px solid #111">
<div><div class="pb"><p class="a">3/11 1阪⑤</p><p class="b">コーラ<em class="r">L</em></p><p class="c">西ダ /-12</p><p class="d">1240<u class="g3">3</u></p><p class="e">岩田康<small>57</small></p><p class="f"><span>7</span><span>9</span><span>9</span></p><p class="h">35.7Ⓗ36.3</p><p class="i">タガノビ0.0</p><p class="j"><s>良</s><s>平</s>スタ悪い</p><p class="k">面GHネ</p><p class="m">16ト 8 ③</p><div class="n"><span>468</span><b>65</b><span>67<br>67</span></div></div></div>
<div><div class="pb"><p class="a">4/19 1阪</p><p class="b">京都G<em>Ⅲ</em></p><p class="c">三ダ /-5</p><p class="d">1123<u class="g0">6</u></p><p class="e">北村友<small>57</small></p><p class="f"><span>8</span><span>7</span><span>7</span></p><p class="h">36.0Ⓗ36.3</p><p class="i">ドンフラン1.5内</p><p class="j"><s>良</s><s>平</s>不利</p><p class="k">面GN頭ネ</p><p class="m">16ト 7 ③</p><div class="n"><span>506</span><b>66</b><span>69<br>63</span></div></div></div>
<div><div class="pb"><p class="a">4/19 2東</p><p class="b">東京ス<em>OP</em></p><p class="c">六ダ /-3</p><p class="d">1118<u class="g0">6</u></p><p class="e">田辺裕<small>57</small></p><p class="f"><span>7</span><span>7</span><span>6</span></p><p class="h">35.7Ⓗ36.2</p><p class="i">リュウノユ1.2</p><p class="j"><s>良</s><s>平</s>スタ悪い</p><p class="k">面GHネ</p><p class="m">16ト 8 ③</p><div class="n"><span>505</span><b>50</b><span>67<br>63</span></div></div></div>
<div><div class="pb"><p class="a">3/11 1阪</p><p class="b">コーラ<em class="r">L</em></p><p class="c">西ダ /-12</p><p class="d">1240<u class="g1">1</u></p><p class="e">石橋脩<small>57</small></p><p class="f"><span>16</span><span>12</span><span>12</span></p><p class="h">36.2Ⓗ36.3</p><p class="i">ブルベアイ0.0</p><p class="j"><s>良</s><s>平</s>立回り</p><p class="k">面EGH引ネ</p><p class="m">16ト 7 ①</p><div class="n"><span>520</span><b>67</b><span>68<br>66</span></div></div></div>
<div><div class="pb"><p class="a">4/23 2東</p><p class="b">欅S<em>OP</em></p><p class="c">六ダ /-12</p><p class="d">1237<u class="g0">4</u></p><p class="e">柴田大<small>57</small></p><p class="f"><span>7</span><span>7</span><span>8</span></p><p class="h">35.7Ⓗ36.7</p><p class="i">バトルクラ0.4</p><p class="j"><s>良</s><s>平</s>追って</p><p class="k">面RHネ</p><p class="m">16ト 6 ⑤</p><div class="n"><span>486</span><b>59</b><span>66<br>59</span></div></div></div>
<div><div class="pb"><p class="a">4/23 2東</p><p class="b">欅S<em>OP</em></p><p class="c">六ダ /-12</p><p class="d">1241<u class="g0">9</u></p><p class="e">太宰啓<small>57</small></p><p class="f"><span>2</span><span>2</span><span>2</span></p><p class="h">34.8Ⓗ37.0</p><p class="i">バトルクラ1.5</p><p class="j"><s>良</s><s>平</s>R端入</p><p class="k">面Hネ</p><p class="m">16ト 14 ⑦</p><div class="n"><span>520</span><b>56</b><span>66<br>58</span></div></div></div>
<div><div class="pb"><p class="a">2/25 サ</p><p class="b">リヤド<em>Ⅲ</em></p><p class="c">サダ /</p><p class="d">1119<u class="g0">2</u></p><p class="e">福永祐<small>57</small></p><p class="f"><span></span><span></span><span></span></p><p class="h"></p><p class="i">エリートパ</p><p class="j">後方から</p><p class="k">面RGHネ</p><p class="m">9ト</p><div class="n"><span></span><b></b><span></span></div></div></div>
<div><div class="pb"><p class="a">4/9 1阪</p><p class="b">BSイ<em>OP</em></p><p class="c">西ダ /-14</p><p class="d">1226<u class="g0">9</u></p><p class="e">水口優<small>56</small></p><p class="f"><span>7</span><span>7</span><span>7</span></p><p class="h">36.0Ⓗ35.2</p><p class="i">ウインアキ0.2</p><p class="j"><s>良</s><s>平</s>完歩小</p><p class="k">面Hネ</p><p class="m">16ト 7 ③</p><div class="n"><span>470</span><b>65</b><span>66<br>64</span></div></div></div>
<div><div class="pb"><p class="a">2/5 1東</p><p class="b">吾妻小<em>3勝</em></p><p class="c">六ダ /-10</p><p class="d">1450<u class="g1">1</u></p><p class="e">富田暁<small>56</small></p><p class="f"><span>3</span><span>4</span><span>4</span></p><p class="h">36.8Ⓗ37.0</p><p class="i">ブラックワ0.4</p><p class="j"><s>良</s><s>平</s>完歩小</p><p class="k">面Hネ</p><p class="m">16ト 13 ③</p><div class="n"><span>514</span><b>63</b><span>66<br>63</span></div></div></div>
<div><div class="pb"><p class="a">3/11 1阪</p><p class="b">コーラ<em class="r">L</em></p><p class="c">西ダ /-12</p><p class="d">1241<u class="g0">5</u></p><p class="e">池添謙<small>57</small></p><p class="f"><span>1</span><span>1</span><span>1</span></p><p class="h">34.4Ⓗ37.6</p><p class="i">タガノビ0.1</p><p class="j"><s>良</s><s>平</s>二脚遅い</p><p class="k">Rネ</p><p class="m">16ト 5 ③</p><div class="n"><span>508</span><b>62</b><span>61<br>63</span></div></div></div>
<div><div class="pb"><p class="a">4/9 1阪</p><p class="b">BSイ<em>OP</em></p><p class="c">西ダ /-18</p><p class="d">1230<u class="g0">5</u></p><p class="e">ルメー<small>57</small></p><p class="f"><span>1</span><span>1</span><span>1</span></p><p class="h">35.2Ⓗ36.1</p><p class="i">フルム 0.4</p><p class="j"><s>良</s><s>平</s>完歩小</p><p class="k">面Hネ</p><p class="m">16ト 2 ⑥</p><div class="n"><span>526</span><b>59</b><span>66<br>58</span></div></div></div>
<div><div class="pb"><p class="a">5/6 2東</p><p class="b">鎌倉S<em>3勝</em></p><p class="c">六ダ /-8</p><p class="d">1247<u class="g0">4</u></p><p class="e">鮫島駿<small>57</small></p><p class="f"><span>3</span><span>2</span><span>2</span></p><p class="h">34.7Ⓗ37.8</p><p class="i">フォーワイ0.5</p><p class="j"><s>良</s><s>平</s>完歩小</p><p class="k">面Hネ</p><p class="m">16ト 5 ⑨</p><div class="n"><span>528</span><b>45</b><span>59<br>52</span></div></div></div>
<div><div class="pb"><p class="a">3/11 1阪</p><p class="b">コーラ<em class="r">L</em></p><p class="c">西ダ /-12</p><p class="d">1247<u class="g0">7</u></p><p class="e">松山弘<small>57</small></p><p class="f"><span>3</span><span>3</span><span>4</span></p><p class="h">35.0Ⓗ37.8</p><p class="i">タガノビ0.7</p><p class="j"><s>良</s><s>平</s>スタ良い</p><p class="k">面GHN頭ネ</p><p class="m">16ト 6 ⑦</p><div class="n"><span>504</span><b>56</b><span>61<br>62</span></div></div></div>
<div><div class="pb"><p class="a">5/3 船</p><p class="b">かしわ<em class="r">Ⅰ</em></p><p class="c">船ダ /</p><p class="d">1397<u class="g1">1</u></p><p class="e">川田将<small>57</small></p><p class="f"><span>3</span><span>4</span><span>4</span></p><p class="h">37.8</p><p class="i">メイショウ0.3</p><p class="j">好位</p><p class="k">面RHネ</p><p class="m">14ト 4 ④</p><div class="n"><span>504</span><b></b><span></span></div></div></div>
<div><div class="pb"><p class="a">4/17 3中</p><p class="b">京葉S<em class="r">L</em></p><p class="c">三ダ /-12</p><p class="d">1120<u class="g2">2</u></p><p class="e">宮崎北<small>57</small></p><p class="f"><span>4</span><span>3</span><span>3</span></p><p class="h">34.7Ⓗ37.3</p><p class="i">レジプロク1.5</p><p class="j"><s>良</s><s>平</s>スタ早い</p><p class="k">面RHネ</p><p class="m">16ト 5 ②</p><div class="n"><span>532</span><b>50</b><span>71<br>74</span></div></div></div>
<div><div class="pb"><p class="a">2/19 1東⑧</p><p class="b">フェブ<em class="r">Ⅰ</em></p><p class="c">六ダ / -7</p><p class="d">1375<u class="g0">8</u></p><p class="e">横山和<small>58</small></p><p class="f"><span>4</span><span>5</span><span>5</span></p><p class="h">35.3Ⓗ36.8</p><p class="i">レモンポップ0.9</p><p class="j"><s>良</s><s>平</s>スタ悪</p><p class="k">面EHネバ</p><p class="m">16ト 8 ③</p><div class="n"><span>522</span><b>58</b><span>70<br>72</span></div></div></div>
</div>

<div class="row" style="top:1380px;height:178px;border-bottom:2px solid #111">
<div><div class="pb"><p class="a">4/1 2阪③</p><p class="b">ポラリ<em>OP</em></p><p class="c">西ダ /-10</p><p class="d">1244<u class="g1">1</u></p><p class="e">藤岡佑<small>58</small></p><p class="f"><span>8</span><span>8</span><span>8</span></p><p class="h">35.4Ⓗ36.6</p><p class="i">ケイアイド0.2</p><p class="j"><s>良</s><s>平</s>距離短</p><p class="k">ブ面鼻</p><p class="m">16ト 12 ④</p><div class="n"><span>468<br>○3.3</span><b>65</b><span>61<br>64</span></div></div></div>
<div><div class="pb"><p class="a">6/4 3阪</p><p class="b">天保山<em>OP</em></p><p class="c">三ダ /-6</p><p class="d">1244<u class="g1">1</u></p><p class="e">西村淳<small>57</small></p><p class="f"><span>1</span><span>1</span><span>1</span></p><p class="h">35.0Ⓗ37.1</p><p class="i">メイショウ0.8</p><p class="j"><s>良</s><s>平</s>距離○</p><p class="k">面GN頭ネ</p><p class="m">16ト 12 ④</p><div class="n"><span>500</span><b>62</b><span>57<br>59</span></div></div></div>
<div><div class="pb"><p class="a">6/3 3阪</p><p class="b">松風月<em>OP</em></p><p class="c">西ダ /-10</p><p class="d">1121<u class="g1">1</u></p><p class="e">菱田裕<small>57</small></p><p class="f"><span>3</span><span>3</span><span>3</span></p><p class="h">35.7Ⓗ36.4</p><p class="i">リュウノユ1.3</p><p class="j"><s>良</s><s>平</s>中山向き</p><p class="k">面GHネバ</p><p class="m">16ト 9 ⑩</p><div class="n"><span>500</span><b>50</b><span>68<br>69</span></div></div></div>
<div><div class="pb"><p class="a">5/4 船</p><p class="b">かしわ<em class="r">Ⅰ</em></p><p class="c">船ダ /</p><p class="d">1394<u class="g2">2</u></p><p class="e">石橋脩<small>57</small></p><p class="f"><span>8</span><span>8</span><span>6</span></p><p class="h">37.3</p><p class="i">メイショウ0.3</p><p class="j">乾ク○</p><p class="k">&nbsp;</p><p class="m">14ト 13 ⑤</p><div class="n"><span>520</span><b>72</b><span></span></div></div></div>
<div><div class="pb"><p class="a">6/24 3阪</p><p class="b">天保山<em>OP</em></p><p class="c">三ダ /-6</p><p class="d">1239<u class="g1">1</u></p><p class="e">幸英明<small>57</small></p><p class="f"><span>8</span><span>8</span><span>9</span></p><p class="h">34.8Ⓗ36.9</p><p class="i">ドンフラン0.0</p><p class="j"><s>良</s><s>平</s>R揃入</p><p class="k">面Hネトバ</p><p class="m">16ト 8 ⑩</p><div class="n"><span>480</span><b>64</b><span>62<br>51</span></div></div></div>
<div><div class="pb"><p class="a">6/24 3阪</p><p class="b">天保山<em>OP</em></p><p class="c">三ダ /-6</p><p class="d">1247<u class="g0">7</u></p><p class="e">太宰啓<small>57</small></p><p class="f"><span>3</span><span>3</span><span>3</span></p><p class="h">34.5Ⓗ37.2</p><p class="i">メイショウ0.8</p><p class="j"><s>良</s><s>平</s>二脚遅い</p><p class="k">H5</p><p class="m">16ト 16 ⑨</p><div class="n"><span>532</span><b>57</b><span>60<br>62</span></div></div></div>
<div><div class="pb"><p class="a">3/25 メ</p><p class="b">ドバイ<em class="r">Ⅰ</em></p><p class="c">メダ /</p><p class="d">1109<u class="g0">5</u></p><p class="e">武 豊<small>57</small></p><p class="f"><span></span><span></span><span></span></p><p class="h"></p><p class="i">シベリウス0.3</p><p class="j">スタ悪い</p><p class="k" style="background:#fff">&nbsp;</p><p class="m">14ト &nbsp; &nbsp; &nbsp; ⑦</p><div class="n"><span></span><b style="width:26px;height:22px"></b><span></span></div></div></div>
<div><div class="pb"><p class="a">6/3 3阪</p><p class="b">松風月<em>OP</em></p><p class="c">西ダ /-10</p><p class="d">1113<u class="g0">6</u></p><p class="e">水口優<small>57</small></p><p class="f"><span>15</span><span>14</span><span>6</span></p><p class="h">36.2Ⓗ35.5</p><p class="i">アイアンテ0.6</p><p class="j"><s>良</s><s>平</s>スタ悪い</p><p class="k">面Hネバ</p><p class="m">16ト 3 ⑦</p><div class="n"><span>476<br>△2.0</span><b>56</b><span>66<br>66</span></div></div></div>
<div><div class="pb"><p class="a">5/14 2京</p><p class="b">栗東S<em class="r">L</em></p><p class="c">三ダ /-8</p><p class="d">1258<u class="g0">8</u></p><p class="e">西村淳<small>57</small></p><p class="f"><span>7</span><span>5</span><span>5</span></p><p class="h">34.8Ⓗ37.5</p><p class="i">アイオライ2.4</p><p class="j"><s>良</s><s>平</s>完歩小</p><p class="k">面Hネバ</p><p class="m">16ト 14 ⑧</p><div class="n"><span>510</span><b>45</b><span>62<br>55</span></div></div></div>
<div><div class="pb"><p class="a">4/19 1阪</p><p class="b">京都G<em>Ⅲ</em></p><p class="c">三ダ /-5</p><p class="d">1108<u class="g1">1</u></p><p class="e">池添謙<small>57</small></p><p class="f"><span>1</span><span>1</span><span>1</span></p><p class="h">33.8Ⓗ37.0</p><p class="i">スプラウ0.0</p><p class="j"><s>良</s><s>平</s>二脚遅い</p><p class="k">Rネ</p><p class="m">16ト 5 ⑤</p><div class="n"><span>520</span><b>70</b><span>68<br>62</span></div></div></div>
<div><div class="pb"><p class="a">3/19 1阪</p><p class="b">花のみ<em>2勝</em></p><p class="c">西ダ /-3</p><p class="d">1239<u class="g1">1</u></p><p class="e">ルメー<small>57</small></p><p class="f"><span>5</span><span>4</span><span>4</span></p><p class="h">35.4Ⓗ36.2</p><p class="i">ジャスティ0.0</p><p class="j"><s>良</s><s>平</s>完歩小</p><p class="k">面Hネバ</p><p class="m">16ト 5 ②</p><div class="n"><span>504</span><b>62</b><span>66<br>63</span></div></div></div>
<div><div class="pb"><p class="a">5/28 2東</p><p class="b">麦秋S<em>3勝</em></p><p class="c">六ダ /-13</p><p class="d">1232<u class="g1">1</u></p><p class="e">松山弘<small>57</small></p><p class="f"><span>5</span><span>5</span><span>5</span></p><p class="h">34.9Ⓗ36.3</p><p class="i">トーセン0.1</p><p class="j"><s>良</s><s>平</s>スタ良い</p><p class="k">面Hネバ</p><p class="m">16ト 5 ③</p><div class="n"><span>526</span><b>61</b><span>65<br>60</span></div></div></div>
<div><div class="pb"><p class="a">4/23 2東</p><p class="b">欅S<em>OP</em></p><p class="c">六ダ /-12</p><p class="d">1231<u class="g1">1</u></p><p class="e">菅原明<small>57</small></p><p class="f"><span>3</span><span>3</span><span>3</span></p><p class="h">34.9Ⓗ36.6</p><p class="i">バトルクラ0.2</p><p class="j"><s>良</s><s>平</s>完歩小</p><p class="k">面GHネ</p><p class="m">16ト 4 ②</p><div class="n"><span>496</span><b>56</b><span>63<br>58</span></div></div></div>
<div><div class="pb"><p class="a">6/14 浦</p><p class="b">さきた<em>Ⅱ</em></p><p class="c">浦ダ /</p><p class="d">中止</p><p class="e">川田将<small>56</small></p><p class="f"><span>10</span><span>10</span><span>10</span></p><p class="h"></p><p class="i">イグナイタ</p><p class="j">好位</p><p class="k">Hネ</p><p class="m">14ト 4 ④</p><div class="n"><span>500</span><b></b><span></span></div></div></div>
<div><div class="pb"><p class="a">6/24 3阪</p><p class="b">天保山<em>OP</em></p><p class="c">三ダ /-6</p><p class="d">1259<u class="g0">6</u></p><p class="e">中井裕<small>56</small></p><p class="f"><span>3</span><span>3</span><span>3</span></p><p class="h">34.7Ⓗ39.0</p><p class="i">メイショウ2.0</p><p class="j"><s>良</s><s>平</s>完歩小</p><p class="k">Hネ</p><p class="m">16ト 6 ⑦</p><div class="n"><span>530</span><b>45</b><span>65<br>60</span></div></div></div>
<div><div class="pb"><p class="a">5/27 2東⑪</p><p class="b">欅S<em>OP</em></p><p class="c">西ダ /-12</p><p class="d">1250<u class="g0">15</u></p><p class="e">横山武<small>59</small></p><p class="f"><span>3</span><span>2</span><span>2</span></p><p class="h">35.0Ⓜ38.3</p><p class="i">バトルクラ2.0内</p><p class="j"><s>良</s><s>不</s>R息入ず</p><p class="k">面Hネバ</p><p class="m">16ト 8 ⑥</p><div class="n"><span>528<br>○2.3</span><b>49</b><span>67<br>64</span></div></div></div>
</div>

<div class="row bs" style="top:1558px;height:56px">
<div><span>全
6
6
6
15</span><span>全
2
0
2
2</span><span>小
0
0
0
3</span><span>名
0
0
1
0</span></div>
<div><span>全
5
4
1
11</span><span>全
0
2
1
5</span><span>小
1
2
0
0</span><span>名
0
2
0
3</span></div>
<div><span>全
3
1
1
4</span><span>全
0
0
0
1</span><span>小
0
0
0
0</span><span>名
0
0
0
0</span></div>
<div><span>全
7
5
5
10</span><span>全
6
5
4
5</span><span>小
0
0
0
0</span><span>名
0
1
1
1</span></div>
<div><span>全
5
1
3
15</span><span>全
1
1
1
4</span><span>小
2
0
1
1</span><span>名
1
1
1
1</span></div>
<div><span>全
4
2
4
21</span><span>全
3
1
1
11</span><span>小
0
0
0
0</span><span>名
0
0
1
4</span></div>
<div><span>全
5
0
1
2</span><span>全
3
0
1
1</span><span>小
0
0
0
0</span><span>名
2
0
1
0</span></div>
<div><span>全
4
2
5
7</span><span>全
3
2
3
2</span><span>小
0
0
0
0</span><span>名
2
2
2
1</span></div>
<div><span>全
6
6
4
21</span><span>全
3
3
2
6</span><span>小
0
0
0
0</span><span>名
1
1
1
4</span></div>
<div><span>全
5
1
0
2</span><span>全
2
0
0
1</span><span>小
0
0
0
0</span><span>名
1
0
0
0</span></div>
<div><span>全
3
1
1
3</span><span>全
2
1
0
2</span><span>小
0
0
0
0</span><span>名
0
0
0
1</span></div>
<div><span>全
4
2
2
7</span><span>全
1
1
0
3</span><span>小
0
0
0
1</span><span>名
1
0
0
2</span></div>
<div><span>全
4
2
0
2</span><span>全
2
1
0
1</span><span>小
0
0
0
0</span><span>名
0
0
0
0</span></div>
<div><span>全
5
4
3
10</span><span>全
1
1
0
2</span><span>小
0
0
0
0</span><span>名
0
0
0
1</span></div>
<div><span>全
7
3
4
25</span><span>全
3
1
2
8</span><span>小
0
0
0
1</span><span>名
1
0
1
3</span></div>
<div><span>全
6
4
0
16</span><span>全
6
4
0
8</span><span>小
0
0
0
0</span><span>名
3
2
0
4</span></div>
</div>
<div class="row tx" style="top:1614px;height:12px;line-height:11px;background:#555;color:#fff;letter-spacing:5px"><div>2203</div><div>0202</div><div>0011</div><div>1011</div><div>1013</div><div>3022</div><div>1000</div><div>0004</div><div>2213</div><div>1000</div><div>0001</div><div>0002</div><div>0011</div><div>0000</div><div>1012</div><div>2113</div></div>
<div class="row tx" style="top:1626px;height:14px;line-height:13px;font-size:12px;letter-spacing:5px"><div>2358</div><div>1007</div><div>1003</div><div>33410</div><div>10011</div><div>12321</div><div>3001</div><div>0003</div><div>23011</div><div>1002</div><div>0012</div><div>2105</div><div>2003</div><div>1101</div><div>0004</div><div>2307</div></div>
<div class="row tx" style="top:1640px;height:12px;line-height:12px;font-size:10.5px;font-weight:bold"><div>⑯オメガレイ</div><div>⑮オーヴァー</div><div>⑭アティード</div><div>⑬タガノビュ</div><div>⑫メイショウ</div><div>⑪メイショウ</div><div>⑩リメイク</div><div>⑨フルム</div><div>⑧ブルベアイ</div><div>⑦ドンフラン</div><div>⑥イフティフ</div><div>⑤エルバリオ</div><div>④ジレトール</div><div>③シャマル</div><div>②ロイヤルパ</div><div>①ケイアイタ</div></div>

<div class="lab" style="top:77px;height:21px;font-size:14px;font-weight:bold;line-height:21px">枠番</div>
<div class="lab" style="top:98px;height:20px;font-size:14px;font-weight:bold;line-height:20px">馬番</div>
<div class="lab" style="top:118px;height:189px;font-size:13px;line-height:16px">
<div style="font-size:11px;margin-top:4px">馬記号</div>
<div style="display:flex;justify-content:space-around;margin-top:4px"><span>母<br><br>母<br>父</span><span>馬<br><br>名</span><span>父<br><br>父<br>父</span></div>
<div style="display:flex;justify-content:space-around;margin-top:34px;align-items:flex-end"><span>性<br>齢</span><span style="writing-mode:vertical-rl;font-size:12px">（激走馬印）</span><span>毛<br>色</span></div></div>
<div class="lab" style="top:307px;height:38px;line-height:12px;font-size:9px">乗替 　斤量 ブリンカー<br><span style="font-size:12px">騎手名</span><br>本年勝利数と順位</div>
<div class="lab" style="top:345px;height:25px;line-height:12px;font-size:11px">厩舎［所属］<br><span style="font-size:9px">本年勝利数と順位</span></div>
<div class="lab" style="top:370px;height:16px;line-height:16px;font-size:8.5px">放牧先［帰厩後何走目］ランク</div>
<div class="lab" style="top:386px;height:16px;line-height:16px">間隔 / 厩舎指数</div>
<div class="lab" style="top:402px;height:16px;line-height:16px">調教指数 / 調教評価</div>
<div class="lab" style="top:418px;height:16px;line-height:16px;font-size:9px">情報専門紙［◎,○,▲,△］</div>
<div class="ab" style="left:950px;top:434px;width:22px;height:1124px;background:#555;color:#fff;font-weight:bold;font-size:15px;border-left:1px solid #222"></div>
<div class="ab" style="left:954px;top:455px;writing-mode:vertical-rl;color:#fff;font-weight:bold;font-size:15px;line-height:15px">過去成績集計</div>
<div class="ab" style="left:954px;top:880px;writing-mode:vertical-rl;color:#fff;font-weight:bold;font-size:15px;letter-spacing:10px">4走前</div>
<div class="ab" style="left:954px;top:1058px;writing-mode:vertical-rl;color:#fff;font-weight:bold;font-size:15px;letter-spacing:10px">3走前</div>
<div class="ab" style="left:954px;top:1236px;writing-mode:vertical-rl;color:#fff;font-weight:bold;font-size:15px;letter-spacing:10px">2走前</div>
<div class="ab" style="left:954px;top:1414px;writing-mode:vertical-rl;color:#fff;font-weight:bold;font-size:15px;letter-spacing:10px">1走前</div>
<div class="ab" style="left:950px;top:1023px;width:22px;height:2px;background:#111"></div>
<div class="ab" style="left:950px;top:1201px;width:22px;height:2px;background:#111"></div>
<div class="ab" style="left:950px;top:1379px;width:22px;height:2px;background:#111"></div>
<div class="lab lab2" style="top:434px;height:17px;background:#111;color:#fff;font-weight:bold;font-size:13px;line-height:17px;letter-spacing:4px">IDM</div>
<div class="lab lab2" style="top:451px;height:43px;font-size:11px;line-height:14px">情報<br>追切　展開<br>仕上 <b style="font-size:15px">本紙</b></div>
<div class="lab lab2" style="top:494px;height:15px;line-height:15px;font-size:11px">基準単（人気）</div>
<div class="lab lab2" style="top:509px;height:15px;line-height:15px;font-size:11px">基準複（人気）</div>
<div class="lab lab2" style="top:524px;height:58px;font-size:11px;line-height:17px;padding-top:10px">距離別の<br>競走成績</div>
<div class="lab lab2" style="top:582px;height:77px;font-size:10px;line-height:11px;padding-top:2px">距離別の<br>最高IDM<br>IDM<br>競馬場<br>着順<br>記録時期</div>
<div class="lab lab2" style="top:659px;height:13px;line-height:13px">当該コース成績</div>
<div class="lab lab2" style="top:672px;height:21px;line-height:10px;font-size:7.5px">当該コース最高IDM、ペース<br>着順、タイム、記録時期</div>
<div class="lab lab2" style="top:693px;height:13px;line-height:13px;font-size:8px">持ち時計 / 当該コース時計</div>
<div class="lab lab2" style="top:706px;height:13px;line-height:13px;font-size:9.5px">出遅率(%) 連対率(%)</div>
<div class="lab lab2" style="top:719px;height:13px;line-height:13px">馬 × 騎手成績</div>
<div class="lab lab2" style="top:732px;height:13px;line-height:13px;font-size:11px">脚質</div>
<div class="lab lab2" style="top:745px;height:13px;line-height:13px;font-size:11px">適距離</div>
<div class="lab lab2" style="top:758px;height:13px;line-height:13px;font-size:11px">蹄 / 重適性</div>
<div class="lab lab2" style="top:771px;height:13px;line-height:13px;font-size:11px">繋</div>
<div class="lab lab2" style="top:784px;height:13px;line-height:13px;font-size:11px">体型</div>
<div class="lab lab2" style="top:797px;height:13px;line-height:13px;font-size:11px">馬主</div>
<div class="lab lab2" style="top:810px;height:13px;line-height:13px;font-size:11px">生産者</div>
<div class="lab lab2" style="top:823px;height:13px;line-height:13px;font-size:11px">獲得賞金</div>
<div class="lab lab2" style="top:836px;height:10px;line-height:10px;font-size:11px">収得賞金</div>
<div class="lab lab2" style="top:846px;height:30px;background:#111;color:#fff;font-size:12px;line-height:15px">競走成績欄の<br>説明</div>
<div class="lab lab2" style="top:876px;height:682px;text-align:left;padding-left:3px;font-size:11px;line-height:13px;white-space:normal">
<div style="height:26px"><b>[1行目]</b><br>開催日 / 回場日</div>
<div style="height:27px;margin-top:2px"><b>[2行目]</b><br>レース名 / クラス</div>
<div style="height:27px"><b>[3行目]</b><br>距離コース / 馬場差</div>
<div style="height:27px"><b>[4行目]</b><br>タイム / 着順</div>
<div style="height:28px"><b>[5行目]</b><br>騎手 / 斤量</div>
<div style="height:72px;font-size:10px;line-height:12px"><b style="font-size:11px">[6行目]</b><br>コーナー順位<br>1角,2角,3角,4角<br>出遅れデータを1角に表します。(例)<br>❷ :2馬身出遅れ</div>
<div style="height:30px"><b>[7行目]</b><br>前3F/ペース/後3F</div>
<div style="height:40px"><b>[8行目]</b><br>勝馬（または2着馬）<br>着差 / 直線位置取り</div>
<div style="height:34px"><b>[9行目]</b><br>馬体 / 気配 / 特記</div>
<div style="height:28px"><b>[10行目]</b><br>馬具 / 脚元</div>
<div style="height:28px"><b>[11行目]</b><br>頭数 / 枠 / 人気</div>
<div style="height:52px"><b>[12行目]</b><br>馬体重 / パドック点<br>IDM<br>(上) 追切指数<br>(下) 仕上指数</div>
<div style="margin-top:4px"><span style="background:#111;color:#fff">IDM</span>の白抜数字は<br>ダート戦</div>
</div>
<div class="ab" style="left:950px;top:1558px;width:22px;height:56px;background:#bbb;border-left:1px solid #222;font-size:12px;font-weight:bold;writing-mode:vertical-rl;text-align:center;line-height:22px;padding-top:4px">全成績</div>
<div class="lab lab2" style="top:1558px;height:56px;font-size:12px;line-height:14px;padding-top:8px">競馬場別成績<br><span style="font-size:9px">（芝・ダ・障別）</span><br><span style="line-height:22px">回り別成績</span></div>
<div class="lab" style="top:1614px;height:12px;line-height:12px;background:#555;color:#fff;font-size:11px">重・不良成績</div>
<div class="lab" style="top:1626px;height:14px;line-height:14px;font-size:11px;font-weight:bold">クラス別成績</div>
<div class="lab" style="top:1640px;height:13px;line-height:13px;font-size:11px;font-weight:bold">馬番 / 馬名</div>
<div class="ab" style="left:1067px;top:77px;width:1px;height:1576px;background:#111"></div>

<div class="ab" style="left:1110px;top:93px;border:1px solid #222;padding:0 3px;font-size:12px;font-weight:bold;line-height:15px">展開予想</div>
<div class="ab" style="left:1100px;top:111px;font-size:10px;font-weight:bold">予想ペース <span style="font-size:12px">H</span></div>
<div class="ab" style="left:1108px;top:126px;font-size:12px;font-weight:bold">ゴール図</div>
<div class="ab" style="left:1083px;top:142px;width:88px;height:360px;border:1px solid #999"></div>
<div class="ab" style="left:1086px;top:144px;font-size:10px;font-weight:bold;line-height:11px;letter-spacing:1px;width:82px">○ ○ ○ ○ ○<br>大 外 中 内 最<br>外 　　 ↑ 内</div>
<div class="strip" style="top:142px;height:360px">差
0
1
2
3
4
5
6
7
8
9
0
1
2
3
4
5
6
7
8
9
0
1
2
3
4
5
6
7
8</div>
<div class="hi" style="left:1153px;top:187px;--c:#2a72c0">7</div>
<div class="hi" style="left:1139px;top:222px;--c:#fff100">10</div>
<div class="hi" style="left:1153px;top:278px;--c:#111">4</div>
<div class="hi" style="left:1105px;top:340px;--c:#f57f45">13</div>
<div class="hi" style="left:1140px;top:352px;--c:#f28cbf">16</div>
<div class="hi" style="left:1125px;top:375px;--c:#e8222b">5</div>
<div class="hi" style="left:1155px;top:378px;--c:#111">3</div>
<div class="hi" style="left:1088px;top:388px;--c:#1e73be">8</div>
<div class="hi" style="left:1105px;top:388px;--c:#3db54a">12</div>
<div class="hi" style="left:1142px;top:390px;--c:#fff100">9</div>
<div class="hi" style="left:1088px;top:414px;--c:#f28cbf">15</div>
<div class="hi" style="left:1105px;top:428px;--c:#e8222b">6</div>
<div class="hi" style="left:1142px;top:428px;--c:#3db54a">11</div>
<div class="hi" style="left:1122px;top:452px;--c:#fff">2</div>
<div class="hi" style="left:1155px;top:452px;--c:#fff">1</div>
<div class="ab" style="left:1083px;top:503px;width:100px;height:17px;background:#fff;font-size:12px;font-weight:bold;text-align:center;line-height:17px">残り3F図</div>
<div class="ab" style="left:1083px;top:520px;width:88px;height:357px;border:1px solid #999"></div>
<div class="ab" style="left:1098px;top:535px;font-size:12px;font-weight:bold;line-height:13px;letter-spacing:3px">大外中内<br>外　　↑</div>
<div class="strip" style="top:520px;height:357px;padding-top:28px">差
0
1
2
3
4
5
6
7
8
9
0
1
2
3
4
5
6
7
8
9
0
1
2
3
4
5</div>
<div class="hi" style="left:1155px;top:564px;--c:#2a72c0">7</div>
<div class="hi" style="left:1155px;top:586px;--c:#111">4</div>
<div class="hi" style="left:1139px;top:598px;--c:#3db54a">11</div>
<div class="hi" style="left:1155px;top:608px;--c:#fff">1</div>
<div class="hi" style="left:1122px;top:622px;--c:#e8222b">6</div>
<div class="hi" style="left:1139px;top:622px;--c:#fff">2</div>
<div class="hi" style="left:1088px;top:634px;--c:#1e73be">8</div>
<div class="hi" style="left:1139px;top:645px;--c:#e8222b">5</div>
<div class="hi" style="left:1155px;top:645px;--c:#111">3</div>
<div class="hi" style="left:1105px;top:658px;--c:#3db54a">12</div>
<div class="hi" style="left:1105px;top:706px;--c:#f28cbf">16</div>
<div class="hi" style="left:1122px;top:706px;--c:#f28cbf">15</div>
<div class="hi" style="left:1155px;top:706px;--c:#fff100">10</div>
<div class="hi" style="left:1139px;top:718px;--c:#f57f45">13</div>
<div class="hi" style="left:1155px;top:728px;--c:#f57f45">14</div>
<div class="hi" style="left:1155px;top:758px;--c:#fff100">9</div>
<div class="ab" style="left:1083px;top:878px;width:100px;height:16px;background:#fff;font-size:12px;font-weight:bold;text-align:center;line-height:16px">道中図</div>
<div class="ab" style="left:1083px;top:895px;width:88px;height:620px;border:1px solid #999"></div>
<div class="ab" style="left:1118px;top:910px;font-size:12px;font-weight:bold;line-height:13px;letter-spacing:4px">外中内<br>　　↑</div>
<div class="strip" style="top:895px;height:620px;padding-top:30px">差
0
1
2
3
4
5
6
7
8
9
0
1
2
3
4
5
6
7
8
9
0
(
1
=
半
馬
身
)</div>
<div class="hi" style="left:1155px;top:940px;--c:#2a72c0">7</div>
<div class="hi" style="left:1139px;top:970px;--c:#3db54a">11</div>
<div class="hi" style="left:1155px;top:985px;--c:#111">4</div>
<div class="hi" style="left:1122px;top:1008px;--c:#e8222b">6</div>
<div class="hi" style="left:1139px;top:1020px;--c:#fff">2</div>
<div class="hi" style="left:1155px;top:1020px;--c:#fff">1</div>
<div class="hi" style="left:1139px;top:1043px;--c:#e8222b">5</div>
<div class="hi" style="left:1155px;top:1043px;--c:#111">3</div>
<div class="hi" style="left:1122px;top:1056px;--c:#1e73be">8</div>
<div class="hi" style="left:1139px;top:1068px;--c:#3db54a">12</div>
<div class="hi" style="left:1155px;top:1068px;--c:#fff100">10</div>
<div class="hi" style="left:1139px;top:1105px;--c:#f28cbf">15</div>
<div class="hi" style="left:1122px;top:1118px;--c:#f28cbf">16</div>
<div class="hi" style="left:1155px;top:1118px;--c:#f57f45">13</div>
<div class="hi" style="left:1139px;top:1130px;--c:#f57f45">14</div>
<div class="hi" style="left:1155px;top:1165px;--c:#fff100">9</div>

<div class="ab" style="left:22px;top:1655px;font-size:12.5px;line-height:16px;white-space:nowrap;color:#222">万全を期する為に、当日の発走時刻、出走馬、斤量、騎手、枠順等はＪＲＡ発行のものと照合してください。※本紙からの複製、転載、システムの転用を禁ずる。</div>
</body></html>
